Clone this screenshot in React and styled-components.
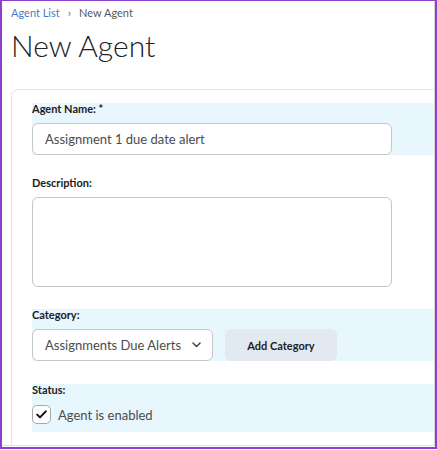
import React from 'react';
import styled, { createGlobalStyle } from 'styled-components';

const GlobalStyle = createGlobalStyle`
	html, body {
		margin: 0;
		padding: 0;
		background: #ffffff;
	}
	body {
		font-family: Lato, 'Open Sans', sans-serif;
		color: #202122;
	}
	* {
		box-sizing: border-box;
	}
`;

const Frame = styled.div`
	width: 437px;
	height: 449px;
	border: 2px solid #8a40c8;
	border-top-width: 1px;
	display: flex;
	flex-direction: column;
	padding-bottom: 1px;
`;

const Page = styled.div`
	flex: 1;
	display: flex;
	flex-direction: column;
	overflow: hidden;
	border-right: 1px solid #d6d6d6;
	border-bottom: 1px solid #e0e0e0;
`;

const Breadcrumbs = styled.nav`
	display: flex;
	align-items: center;
	gap: 6px;
	padding: 4px 0 0 9px;
	font-size: 11px;
	line-height: 16px;
`;

const CrumbLink = styled.a`
	color: #4d7bc7;
	text-decoration: none;
`;

const CrumbSep = styled.span`
	color: #6e7376;
	font-size: 12px;
	margin: 0 2px;
`;

const CrumbCurrent = styled.span`
	color: #565a5c;
`;

const Title = styled.h1`
	margin: 4px 0 0 9px;
	font-size: 30px;
	line-height: 40px;
	font-weight: 300;
	color: #202122;
`;

// card runs past the right and bottom edges of the page, which clips it
const Card = styled.div`
	flex: 1;
	margin: 24px -12px -20px 9px;
	border: 1px solid #e3e5e7;
	border-radius: 8px;
	padding: 13px 0 0 20px;
	display: flex;
	flex-direction: column;
	gap: 22px;
`;

const Group = styled.div`
	display: flex;
	flex-direction: column;
	align-items: flex-start;
	background: ${({ $highlight }) => ($highlight ? '#e8f6fe' : 'transparent')};
	padding-bottom: ${({ $padBottom }) => $padBottom || 0}px;
	margin-top: ${({ $shift }) => $shift || 0}px;
`;

const Label = styled.label`
	font-size: 11px;
	line-height: 12px;
	font-weight: 700;
	color: #202122;
	margin-bottom: 8px;
`;

const TextInput = styled.div`
	width: 360px;
	height: 32px;
	background: #ffffff;
	border: 1px solid #c4c7c9;
	border-radius: 6px;
	padding: 0 12px;
	display: flex;
	align-items: center;
	font-size: 13px;
	color: #494c4e;
`;

const TextArea = styled.div`
	width: 360px;
	height: 90px;
	background: #ffffff;
	border: 1px solid #c4c7c9;
	border-radius: 6px;
`;

const Controls = styled.div`
	display: flex;
	align-items: center;
	gap: 12px;
`;

const Select = styled.div`
	width: 181px;
	height: 32px;
	background: #ffffff;
	border: 1px solid #c4c7c9;
	border-radius: 6px;
	padding: 0 11px 0 12px;
	display: flex;
	align-items: center;
	justify-content: space-between;
	font-size: 13px;
	color: #494c4e;
`;

const Button = styled.button`
	width: 112px;
	height: 32px;
	border: none;
	border-radius: 6px;
	background: #e3e9f1;
	font-family: inherit;
	font-size: 11px;
	font-weight: 700;
	color: #202122;
`;

const CheckRow = styled.div`
	display: flex;
	align-items: center;
	gap: 7px;
	margin-top: 1px;
	font-size: 13px;
	color: #494c4e;
`;

const CheckBox = styled.span`
	width: 19px;
	height: 19px;
	border: 1px solid #a4a8ab;
	border-radius: 5px;
	background: #ffffff;
	display: flex;
	align-items: center;
	justify-content: center;
`;

const Chevron = () => (
	<svg width="9" height="6" viewBox="0 0 9 6" fill="none">
		<polyline points="1,1 4.5,4.5 8,1" stroke="#494c4e" strokeWidth="1.6" strokeLinecap="round" strokeLinejoin="round" />
	</svg>
);

const Check = () => (
	<svg width="11" height="9" viewBox="0 0 11 9" fill="none">
		<polyline points="1.2,4.6 4,7.4 9.8,1.4" stroke="#111" strokeWidth="2" strokeLinecap="round" strokeLinejoin="round" />
	</svg>
);

export default function App() {
	return (
		<>
			<GlobalStyle />
			<Frame>
				<Page>
					<Breadcrumbs>
						<CrumbLink href="#">Agent List</CrumbLink>
						<CrumbSep>›</CrumbSep>
						<CrumbCurrent>New Agent</CrumbCurrent>
					</Breadcrumbs>
					<Title>New Agent</Title>
					<Card>
						<Group $highlight>
							<Label>Agent Name: *</Label>
							<TextInput>Assignment 1 due date alert</TextInput>
						</Group>
						<Group>
							<Label>Description:</Label>
							<TextArea />
						</Group>
						<Group $highlight>
							<Label>Category:</Label>
							<Controls>
								<Select>
									<span>Assignments Due Alerts</span>
									<Chevron />
								</Select>
								<Button>Add Category</Button>
							</Controls>
						</Group>
						<Group $highlight $padBottom={8} $shift={1}>
							<Label>Status:</Label>
							<CheckRow>
								<CheckBox>
									<Check />
								</CheckBox>
								<span>Agent is enabled</span>
							</CheckRow>
						</Group>
					</Card>
				</Page>
			</Frame>
		</>
	);
}
